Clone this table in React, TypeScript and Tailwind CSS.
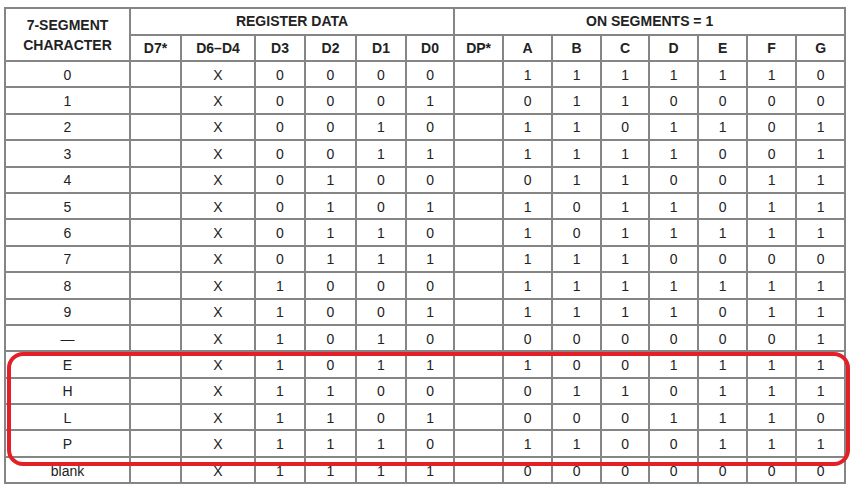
const REGISTER_COLS = ['D7*', 'D6–D4', 'D3', 'D2', 'D1', 'D0'];
const SEGMENT_COLS = ['DP*', 'A', 'B', 'C', 'D', 'E', 'F', 'G'];
const COL_WIDTHS = [125, 51, 74, 50, 51, 50, 48, 49, 49, 49, 48, 49, 49, 49, 49];

// char, D3..D0, A..G
const ROWS: [string, string, string][] = [
  ['0', '0000', '1111110'],
  ['1', '0001', '0110000'],
  ['2', '0010', '1101101'],
  ['3', '0011', '1111001'],
  ['4', '0100', '0110011'],
  ['5', '0101', '1011011'],
  ['6', '0110', '1011111'],
  ['7', '0111', '1110000'],
  ['8', '1000', '1111111'],
  ['9', '1001', '1111011'],
  ['—', '1010', '0000001'],
  ['E', '1011', '1001111'],
  ['H', '1100', '0110111'],
  ['L', '1101', '0001110'],
  ['P', '1110', '1100111'],
  ['blank', '1111', '0000000'],
];

const cell = 'border-2 border-[#858585] text-center align-middle p-0';
const td = `${cell} pt-[2px]`;

export default function App() {
  return (
    <div className="relative h-[492px] w-[852px] overflow-hidden bg-white font-['Liberation_Sans',Arial,sans-serif] text-[14px] text-[#222]">
      <div className="pl-[4px] pt-[7px]">
        <table className="w-[842px] table-fixed border-collapse">
          <colgroup>
            {COL_WIDTHS.map((w, i) => (
              <col key={i} style={{ width: w }} />
            ))}
          </colgroup>
          <thead className="font-bold">
            <tr className="h-[27px]">
              <th rowSpan={2} className={`${cell} leading-[20px]`}>
                7-SEGMENT
                <br />
                CHARACTER
              </th>
              <th colSpan={6} className={cell}>
                REGISTER DATA
              </th>
              <th colSpan={8} className={cell}>
                ON SEGMENTS = 1
              </th>
            </tr>
            <tr className="h-[26px]">
              {[...REGISTER_COLS, ...SEGMENT_COLS].map((c) => (
                <th key={c} className={`${cell} pt-[1px]`}>
                  {c}
                </th>
              ))}
            </tr>
          </thead>
          <tbody>
            {ROWS.map(([ch, reg, seg]) => (
              <tr key={ch} className="h-[26.4px]">
                <td className={td}>{ch}</td>
                <td className={td}></td>
                <td className={td}>X</td>
                {reg.split('').map((b, i) => (
                  <td key={`r${i}`} className={td}>
                    {b}
                  </td>
                ))}
                <td className={td}></td>
                {seg.split('').map((b, i) => (
                  <td key={`s${i}`} className={td}>
                    {b}
                  </td>
                ))}
              </tr>
            ))}
          </tbody>
        </table>
      </div>
      {/* red highlight around E, H, L, P */}
      <div className="pointer-events-none absolute left-[7px] top-[352px] h-[114px] w-[843px] rounded-[16px] border-[4px] border-[#e41f27]" />
    </div>
  );
}
